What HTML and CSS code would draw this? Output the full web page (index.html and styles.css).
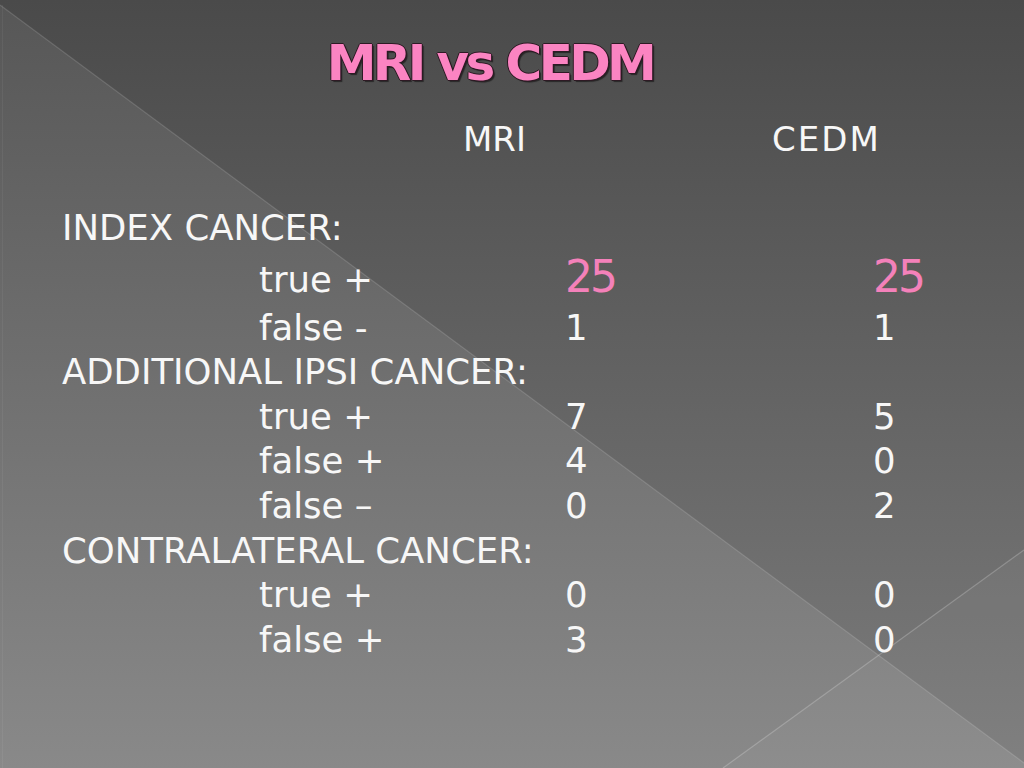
FILE: index.html
```html
<!DOCTYPE html>
<html lang="en">
<head>
<meta charset="utf-8">
<title>MRI vs CEDM</title>
<link rel="stylesheet" href="styles.css">
</head>
<body>
<div class="slide">
  <svg class="bg" width="1024" height="768" viewBox="0 0 1024 768" aria-hidden="true">
    <defs>
      <linearGradient id="g1" x1="0" y1="0" x2="0" y2="1">
        <stop offset="0" stop-color="#4a4a4a"/>
        <stop offset="1" stop-color="#7c7c7c"/>
      </linearGradient>
      <linearGradient id="g2" x1="0" y1="0" x2="0" y2="1">
        <stop offset="0" stop-color="#575757"/>
        <stop offset="1" stop-color="#898989"/>
      </linearGradient>
    </defs>
    <rect width="1024" height="768" fill="url(#g1)"/>
    <polygon points="0,5 1024,763 1024,768 0,768" fill="url(#g2)"/>
    <polygon points="723,768 1024,550 1024,768" fill="rgba(255,255,255,0.035)"/>
    <line x1="0" y1="5" x2="1024" y2="763" stroke="rgba(255,255,255,0.14)" stroke-width="1.2"/>
    <line x1="723" y1="768" x2="1024" y2="550" stroke="rgba(255,255,255,0.22)" stroke-width="1.2"/>
    <line x1="2.5" y1="5" x2="2.5" y2="768" stroke="rgba(255,255,255,0.05)" stroke-width="1"/>
  </svg>

  <h1 class="title">MRI vs CEDM</h1>

  <div class="colhead">
    <span>MRI</span>
    <span>CEDM</span>
  </div>

  <div class="table">
    <div class="section">INDEX CANCER:</div>
    <div class="row big">
      <span></span><span class="label">true +</span><span class="num pink">25</span><span class="num pink">25</span>
    </div>
    <div class="row">
      <span></span><span class="label">false -</span><span class="num">1</span><span class="num">1</span>
    </div>
    <div class="section">ADDITIONAL IPSI CANCER:</div>
    <div class="row">
      <span></span><span class="label">true +</span><span class="num">7</span><span class="num">5</span>
    </div>
    <div class="row">
      <span></span><span class="label">false +</span><span class="num">4</span><span class="num">0</span>
    </div>
    <div class="row">
      <span></span><span class="label">false –</span><span class="num">0</span><span class="num">2</span>
    </div>
    <div class="section">CONTRALATERAL CANCER:</div>
    <div class="row">
      <span></span><span class="label">true +</span><span class="num">0</span><span class="num">0</span>
    </div>
    <div class="row">
      <span></span><span class="label">false +</span><span class="num">3</span><span class="num">0</span>
    </div>
  </div>
</div>
</body>
</html>
```

FILE: styles.css
```css
html, body {
  margin: 0;
  padding: 0;
  background: #4a4a4a;
}

.slide {
  position: relative;
  width: 1024px;
  height: 768px;
  overflow: hidden;
  font-family: "DejaVu Sans", "Liberation Sans", sans-serif;
  color: #f7f7f7;
}

.bg {
  position: absolute;
  left: 0;
  top: 0;
  z-index: 0;
}

.title,
.colhead,
.table {
  position: relative;
  z-index: 1;
}

.title {
  margin: 0;
  padding-top: 33px;
  width: 980px;
  text-align: center;
  font-size: 50px;
  line-height: 60px;
  font-weight: bold;
  letter-spacing: -3.6px;
  color: #fb84c2;
  text-shadow:
    1px 1px 0 #2e1a24,
    -1px 0 0 #2e1a24,
    0 -1px 0 #2e1a24,
    1px 0 0 #2e1a24,
    0 1px 0 #2e1a24,
    2px 2px 1px rgba(0, 0, 0, 0.5);
}

.colhead {
  margin-top: 26px;
  padding-left: 463px;
  display: grid;
  grid-template-columns: 309px auto;
  font-size: 34px;
  line-height: 40px;
}

.colhead span:last-child {
  letter-spacing: 2px;
}

.table {
  margin-top: 47px;
  padding-left: 62px;
  font-size: 35.5px;
  line-height: 44.6px;
}

.section {
  white-space: nowrap;
}

.row {
  display: grid;
  grid-template-columns: 197px 306px 308px auto;
  align-items: baseline;
  white-space: nowrap;
}

.row.big {
  line-height: 52px;
}

.num.pink {
  color: #f481ba;
  font-size: 44px;
  letter-spacing: -3px;
}
```
